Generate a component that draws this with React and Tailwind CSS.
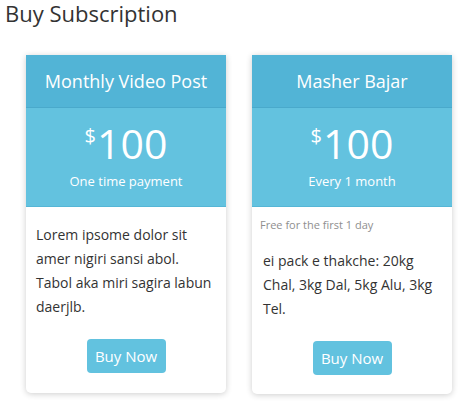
import React from "react";

const plans = [
  {
    title: "Monthly Video Post",
    price: "100",
    period: "One time payment",
    note: null,
    body: "Lorem ipsome dolor sit amer nigiri sansi abol. Tabol aka miri sagira labun daerjlb.",
  },
  {
    title: "Masher Bajar",
    price: "100",
    period: "Every 1 month",
    note: "Free for the first 1 day",
    body: "ei pack e thakche: 20kg Chal, 3kg Dal, 5kg Alu, 3kg Tel.",
  },
];

const PlanCard = ({ plan }) => (
  <div className="w-[200px] bg-white rounded-b-[5px] shadow-[0_1px_6px_rgba(0,0,0,0.2)] flex flex-col">
    <div className="h-[53px] bg-[#52b4d6] border-b border-[#4aa9cb] flex items-center justify-center text-white text-[18px]">
      {plan.title}
    </div>
    <div className="h-[99px] bg-[#63c2df] border-b border-[#55b6d6] flex flex-col items-center pt-[15px] text-white">
      <div className="flex items-start leading-none">
        <span className="text-[20px] mt-[3px] mr-[1px]">$</span>
        <span className="text-[41px] leading-[40px]">{plan.price}</span>
      </div>
      <div className="text-[13px] mt-[9px]">{plan.period}</div>
    </div>
    {plan.note && (
      <div className="text-[11px] text-[#8f8f8f] pl-[8px] pt-[11px] leading-[14px]">{plan.note}</div>
    )}
    {plan.note ? (
      <div className="pt-[17px] pl-[11px] pr-[10px] text-[14px] leading-[24px] text-[#333]">{plan.body}</div>
    ) : (
      <div className="pt-[16px] px-[10px] text-[14px] leading-[24px] text-[#333]">{plan.body}</div>
    )}
    <div className={`flex justify-center pt-[20px] ${plan.note ? "pb-[19px]" : "pb-[20px]"}`}>
      <button className="h-[34px] w-[79px] bg-[#62c2df] rounded-[4px] text-white text-[15px]">
        Buy Now
      </button>
    </div>
  </div>
);

export default function App() {
  return (
    <div className="w-[475px] h-[412px] bg-white font-['Open_Sans',sans-serif]">
      <h1 className="text-[22px] leading-[24px] text-[#333] pl-[5px] pt-[1px]">Buy Subscription</h1>
      <div className="flex items-start gap-[26px] pl-[26px] pt-[30px]">
        {plans.map((plan, idx) => (
          <PlanCard key={idx} plan={plan} />
        ))}
      </div>
    </div>
  );
}
